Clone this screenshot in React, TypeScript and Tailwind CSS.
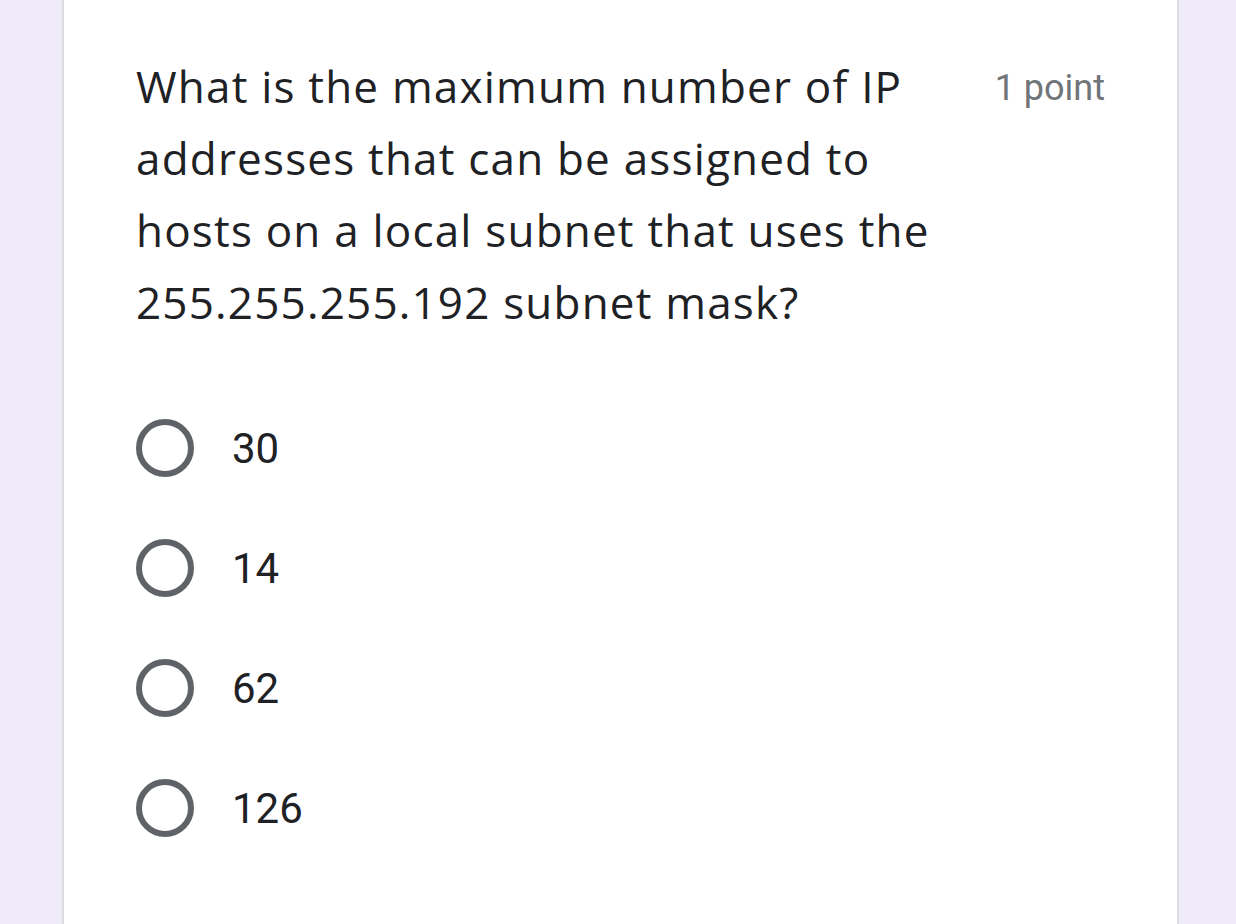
const options = ['30', '14', '62', '126']

export default function App() {
    return (
        <div className="flex h-[924px] w-[1236px] overflow-hidden bg-[#f0ebf8]">
            <div className="ml-[62px] w-[1117px] border-x-2 border-[#dadce0] bg-white px-[72px] pt-[50px]">
                <div className="flex items-start justify-between">
                    <h1 className="text-[44px] leading-[72px] font-normal tracking-[1.2px] text-[#202124] [font-family:'Open_Sans',sans-serif]">
                        What is the maximum number of IP
                        <br />
                        addresses that can be assigned to
                        <br />
                        hosts on a local subnet that uses the
                        <br />
                        255.255.255.192 subnet mask?
                    </h1>
                    <span className="mt-[16px] text-[36px] leading-[44px] text-[#70757a] [font-family:Roboto,sans-serif]">
                        1 point
                    </span>
                </div>
                <div className="mt-[50px] flex flex-col">
                    {options.map((opt) => (
                        <label key={opt} className="flex h-[120px] items-center gap-[38px]">
                            <span className="h-[58px] w-[58px] rounded-full border-[6px] border-[#5f6368]" />
                            <span className="text-[42px] text-[#202124] [font-family:Roboto,sans-serif]">
                                {opt}
                            </span>
                        </label>
                    ))}
                </div>
            </div>
        </div>
    )
}
